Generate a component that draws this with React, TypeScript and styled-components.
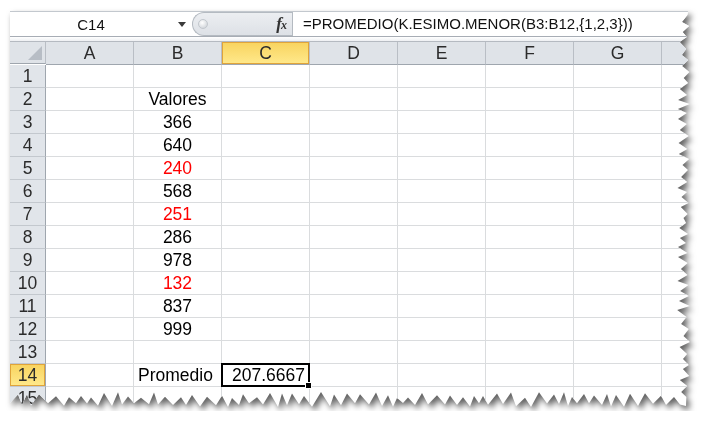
import React from 'react'
import styled, { createGlobalStyle } from 'styled-components'

const GlobalStyle = createGlobalStyle`
  html, body {
    margin: 0;
    padding: 0;
    background: #fff;
  }
  body {
    font-family: 'Liberation Sans', Arial, sans-serif;
  }
`

const SHEET_W = 682
const SHEET_H = 400

// torn paper edge, deterministic so every render is the same
const tornEdge = () => {
  let seed = 11
  const rnd = () => {
    seed = (seed * 9301 + 49297) % 233280
    return seed / 233280
  }
  const pts: string[] = ['0 0', `${SHEET_W - 4}px 0`]
  let i = 0
  for (let y = 4; y < SHEET_H - 12; y += 4 + Math.round(rnd() * 3)) {
    const x = i % 2 ? SHEET_W - 8 - rnd() * 7 : SHEET_W - 2 - rnd() * 4
    pts.push(`${x.toFixed(1)}px ${y}px`)
    i++
  }
  pts.push(`${SHEET_W - 6}px ${SHEET_H - 5}px`)
  i = 0
  for (let x = SHEET_W - 12; x > 4; x -= 4 + Math.round(rnd() * 5)) {
    const y = i % 2 ? SHEET_H - 13 - rnd() * 6 : SHEET_H - 4 - rnd() * 4
    pts.push(`${x}px ${y.toFixed(1)}px`)
    i++
  }
  pts.push(`0 ${SHEET_H - 8}px`)
  return `polygon(${pts.join(', ')})`
}

const TORN = tornEdge()

const Page = styled.div`
  padding: 11px 0 0 10px;
`

const Shadow = styled.div`
  width: ${SHEET_W}px;
  filter: drop-shadow(3px 4px 3px rgba(0, 0, 0, 0.62));
`

const Sheet = styled.div`
  width: ${SHEET_W}px;
  height: ${SHEET_H}px;
  background: #fff;
  overflow: hidden;
  clip-path: ${TORN};
`

const FormulaBar = styled.div`
  display: flex;
  height: 26px;
  box-sizing: border-box;
  border-top: 1px solid #c3c8ce;
  border-bottom: 1px solid #a7adb5;
  background: #fff;
`

const NameBox = styled.div`
  width: 182px;
  display: flex;
  align-items: center;
`

const NameText = styled.div`
  flex: 1;
  text-align: center;
  font-size: 15px;
  color: #111;
`

const DropArrow = styled.div`
  width: 20px;
  display: flex;
  justify-content: center;
  &::before {
    content: '';
    border-top: 5px solid #3a3a3a;
    border-left: 4px solid transparent;
    border-right: 4px solid transparent;
  }
`

const Splitter = styled.div`
  width: 100px;
  box-sizing: border-box;
  display: flex;
  align-items: center;
  justify-content: space-between;
  padding: 0 6px 0 5px;
  background: linear-gradient(#eceef1, #dde1e6);
  border: 1px solid #b4bac1;
  border-right: none;
  border-radius: 13px 0 0 13px;
`

const Dot = styled.span`
  width: 8px;
  height: 8px;
  border-radius: 50%;
  background: radial-gradient(circle at 40% 35%, #fff, #c7ccd2);
  border: 1px solid #c2c7cd;
`

const Fx = styled.span`
  font-family: 'Liberation Serif', 'Times New Roman', serif;
  font-style: italic;
  font-weight: bold;
  font-size: 17px;
  color: #333;
  letter-spacing: -1px;
  & small {
    font-size: 12px;
  }
`

const FormulaInput = styled.div`
  flex: 1;
  border-left: 1px solid #b4bac1;
  padding-left: 10px;
  font-size: 15px;
  line-height: 24px;
  white-space: nowrap;
  color: #111;
`

const Strip = styled.div`
  height: 4px;
  background: linear-gradient(#fff, #eef0f3);
`

const Row = styled.div<{ $head?: boolean }>`
  display: grid;
  grid-template-columns: 36px repeat(7, 88px) 1fr;
  height: 23px;
  ${(p) => p.$head && 'border-top: 1px solid #b5bac1;'}
`

const HeadCell = styled.div<{ $sel?: boolean; $corner?: boolean }>`
  position: relative;
  box-sizing: border-box;
  height: ${(p) => (p.$corner ? 22 : 23)}px;
  border-right: 1px solid #b9bec5;
  border-bottom: 1px solid #9fa6ae;
  background: ${(p) => (p.$sel ? 'linear-gradient(#f8d35e, #ffe98c)' : '#dfe3e8')};
  box-shadow: ${(p) => (p.$sel ? 'inset 0 0 0 1px #e0a43a' : 'none')};
  font-size: 17.5px;
  line-height: 22px;
  text-align: center;
  color: #2b2b2b;
  &::after {
    content: '';
    display: ${(p) => (p.$corner ? 'block' : 'none')};
    position: absolute;
    right: 3px;
    bottom: 3px;
    border-left: 14px solid transparent;
    border-bottom: 14px solid #b7bdc5;
  }
`

const RowHead = styled.div<{ $sel?: boolean }>`
  box-sizing: border-box;
  border-right: 1px solid #9fa6ae;
  border-bottom: 1px solid #c3c8ce;
  background: ${(p) => (p.$sel ? 'linear-gradient(#f8d35e, #ffe98c)' : '#e1e5ea')};
  box-shadow: ${(p) => (p.$sel ? 'inset 0 0 0 1px #e0a43a' : 'none')};
  font-size: 17.5px;
  line-height: 22px;
  text-align: center;
  color: #2b2b2b;
`

const Cell = styled.div<{ $align?: string; $red?: boolean; $sel?: boolean }>`
  position: relative;
  box-sizing: border-box;
  border-right: 1px solid #dadcde;
  border-bottom: 1px solid #dadcde;
  padding: 0 4px;
  font-size: 17.5px;
  line-height: 22px;
  white-space: nowrap;
  text-align: ${(p) => p.$align || 'left'};
  color: ${(p) => (p.$red ? '#ff0000' : '#000')};
  ${(p) =>
    p.$sel &&
    `
    &::after {
      content: '';
      position: absolute;
      inset: -1px -1px -1px -1px;
      border: 2px solid #000;
    }
    &::before {
      content: '';
      position: absolute;
      right: -3px;
      bottom: -3px;
      width: 5px;
      height: 5px;
      background: #000;
      border: 1px solid #fff;
      z-index: 2;
    }
  `}
`

const COLS = ['A', 'B', 'C', 'D', 'E', 'F', 'G', '']

type Entry = { text: string; align?: string; red?: boolean }

const VALUES: Record<number, Entry> = {
  2: { text: 'Valores', align: 'center' },
  3: { text: '366', align: 'center' },
  4: { text: '640', align: 'center' },
  5: { text: '240', align: 'center', red: true },
  6: { text: '568', align: 'center' },
  7: { text: '251', align: 'center', red: true },
  8: { text: '286', align: 'center' },
  9: { text: '978', align: 'center' },
  10: { text: '132', align: 'center', red: true },
  11: { text: '837', align: 'center' },
  12: { text: '999', align: 'center' },
  14: { text: 'Promedio' },
}

const ROWS = Array.from({ length: 16 }, (_, i) => i + 1)

const App = () => {
  return (
    <>
      <GlobalStyle />
      <Page>
        <Shadow>
          <Sheet>
            <FormulaBar>
              <NameBox>
                <NameText>C14</NameText>
                <DropArrow />
              </NameBox>
              <Splitter>
                <Dot />
                <Fx>
                  f<small>x</small>
                </Fx>
              </Splitter>
              <FormulaInput>=PROMEDIO(K.ESIMO.MENOR(B3:B12,{'{1,2,3}'}))</FormulaInput>
            </FormulaBar>
            <Strip />
            <Row $head>
              <HeadCell $corner />
              {COLS.map((c, i) => (
                <HeadCell key={i} $sel={c === 'C'}>
                  {c}
                </HeadCell>
              ))}
            </Row>
            {ROWS.map((r) => {
              const b = VALUES[r]
              return (
                <Row key={r}>
                  <RowHead $sel={r === 14}>{r}</RowHead>
                  <Cell />
                  <Cell $align={b?.align} $red={b?.red}>
                    {b?.text}
                  </Cell>
                  <Cell $align="right" $sel={r === 14}>
                    {r === 14 ? '207.6667' : ''}
                  </Cell>
                  <Cell />
                  <Cell />
                  <Cell />
                  <Cell />
                  <Cell />
                </Row>
              )
            })}
          </Sheet>
        </Shadow>
      </Page>
    </>
  )
}

export default App
